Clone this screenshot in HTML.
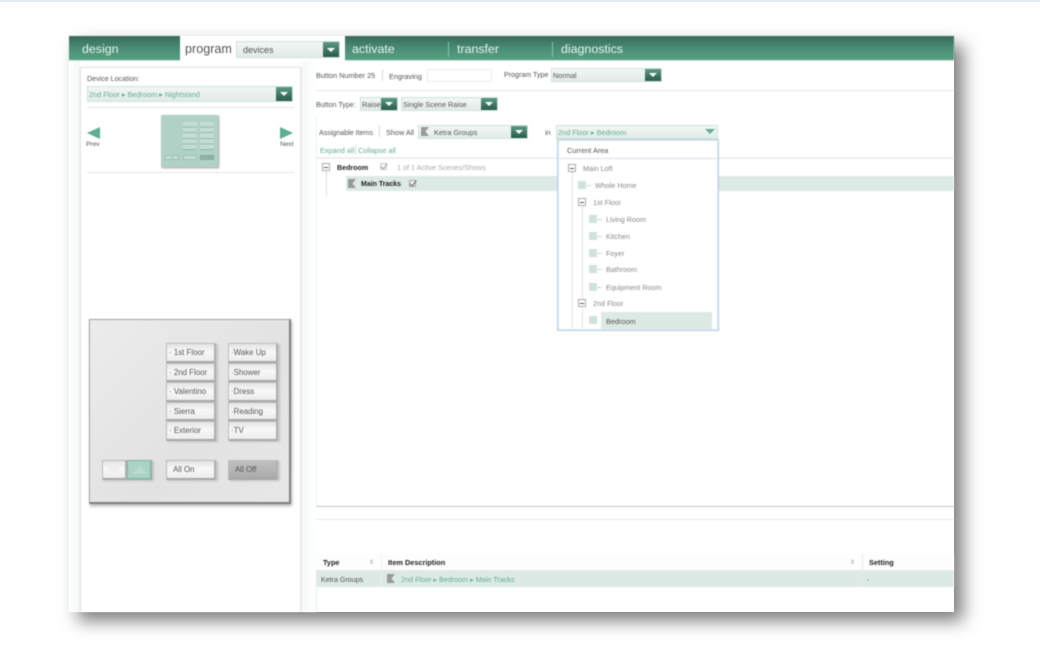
<!DOCTYPE html>
<html><head><meta charset="utf-8">
<style>
html,body{margin:0;padding:0;background:#fff;}
body{width:1040px;height:658px;position:relative;overflow:hidden;font-family:"Liberation Sans",sans-serif;}
#top{position:absolute;left:0;top:0;width:1040px;height:2px;background:#e4e8f2;}
#win{position:absolute;left:69px;top:36px;width:885px;height:576px;background:#fff;box-shadow:9px 9px 16px rgba(0,0,0,.5);}
#c{position:absolute;left:0;top:0;width:1040px;height:658px;overflow:hidden;filter:blur(.4px);}
#c div,#c span.t{position:absolute;}
.t{position:absolute;font-size:7.3px;color:#555;white-space:nowrap;line-height:10px;margin-top:2px;}
.g{color:#5fae94;}
.b{font-weight:bold;color:#222;}
.l{color:#8a8a8a;font-size:7.2px;}
.nav{position:absolute;font-size:12.4px;color:#e6f2ed;line-height:16px;white-space:nowrap;}
.sel{background:linear-gradient(#f2f6f4,#e2ebe7);border:1px solid #cfe3db;box-sizing:border-box;}
.ar{right:0;top:0;bottom:0;width:16px;background:linear-gradient(#5b9b84,#2a5a4a);}
.ar:after{content:"";position:absolute;left:3.5px;top:50%;margin-top:-2px;border-left:4.5px solid transparent;border-right:4.5px solid transparent;border-top:4.5px solid #fff;}
.hl{height:1px;background:#e2e4e3;}
.mb{width:8px;height:8px;border:1px solid #aaa;background:#fff;box-sizing:border-box;}
.mb:after{content:"";position:absolute;left:1px;top:2.5px;width:4px;height:1px;background:#555;}
.sq{width:8px;height:8px;background:#cfe3db;}
.dot{width:4px;border-top:1px dotted #bbb;height:0;}
.vd{width:0;border-left:1px dotted #c8c8c8;}
.kb{width:50px;height:19.5px;box-sizing:border-box;border:1px solid #bdbdbd;border-bottom:2px solid #a8a8a8;border-right:2px solid #b0b0b0;background:linear-gradient(#e4e4e4,#f8f8f8 45%,#ececec);box-shadow:2px 1px 2px rgba(0,0,0,.14);font-size:7.9px;color:#555;line-height:18px;padding-left:2px;white-space:nowrap;}
.ic{width:8px;height:9px;background:#999;clip-path:polygon(0 0,100% 0,55% 50%,100% 100%,0 100%);}
.ck{width:7px;height:7px;border:1px solid #aaa;box-sizing:border-box;background:#eee;}
.ck:after{content:"";position:absolute;left:1px;top:-2px;width:3px;height:6px;border-right:1.3px solid #666;border-bottom:1.3px solid #666;transform:rotate(35deg);}
.col{top:122px;width:14px;height:28px;background:repeating-linear-gradient(#c4ded4 0,#c4ded4 4.6px,#95b9ac 4.6px,#95b9ac 5.6px);box-sizing:border-box;}
.bt{top:155px;width:14px;height:5px;background:#c4ded4;border:1px solid #9dbfb3;box-sizing:border-box;}
</style></head>
<body>
<div id="top"></div>
<div id="win"></div>
<div id="c">
<!-- nav -->
<div style="left:69px;top:36px;width:885px;height:24px;background:linear-gradient(#386a59,#4a8f76 55%,#55a184);"></div>
<div style="left:69px;top:60px;width:885px;height:1px;background:#cfe3db;"></div>
<div style="left:180px;top:36px;width:165px;height:25px;background:#fff;"></div>
<div style="left:69px;top:61px;width:11px;height:551px;background:linear-gradient(90deg,#fff,#f4f8f6);"></div>
<div style="left:301px;top:61px;width:15px;height:551px;background:linear-gradient(90deg,#f6f9f8,#fff);"></div>
<span class="nav" style="left:82px;top:41px;">design</span>
<span class="nav" style="left:185px;top:41px;color:#555;font-size:12.6px;">program</span>
<span class="nav" style="left:352px;top:41px;">activate</span>
<span class="nav" style="left:457px;top:41px;">transfer</span>
<span class="nav" style="left:561px;top:41px;">diagnostics</span>
<div style="left:448px;top:42px;width:1px;height:15px;background:#8fc0ae;"></div>
<div style="left:552px;top:42px;width:1px;height:15px;background:#8fc0ae;"></div>
<div class="sel" style="left:236px;top:41px;width:104px;height:17px;"><div class="ar"></div></div>
<span class="t" style="left:243px;top:43px;font-size:9px;">devices</span>

<!-- left panel -->
<div style="left:80px;top:67px;width:221px;height:545px;box-sizing:border-box;background:#fff;border:1px solid #e3e5e4;border-bottom:0;box-shadow:0 0 2px rgba(0,0,0,.1);"></div>
<span class="t" style="left:87px;top:72px;font-size:7.1px;">Device Location:</span>
<div class="sel" style="left:87px;top:86px;width:206px;height:16px;"><div class="ar"></div></div>
<span class="t g" style="left:89px;top:88px;">2nd Floor ▸ Bedroom ▸ Nightstand</span>
<div class="hl" style="left:87px;top:107px;width:207px;"></div>
<div style="left:87px;top:127px;width:0;height:0;border-top:6px solid transparent;border-bottom:6px solid transparent;border-right:13px solid #5fae8f;"></div>
<div style="left:280px;top:127px;width:0;height:0;border-top:6px solid transparent;border-bottom:6px solid transparent;border-left:13px solid #5fae8f;"></div>
<span class="t" style="left:86px;top:138px;font-size:6.6px;">Prev</span>
<span class="t" style="left:280px;top:138px;font-size:6.6px;">Next</span>
<div style="left:161px;top:115px;width:57px;height:52px;background:#b0d2c6;box-shadow:1px 1px 2px rgba(0,0,0,.4);"></div>
<div class="col" style="left:183px;"></div>
<div class="col" style="left:200px;"></div>
<div class="bt" style="left:165px;"></div>
<div style="left:172px;top:155px;width:1px;height:5px;background:#9dbfb3;"></div>
<div class="bt" style="left:183px;"></div>
<div class="bt" style="left:200px;background:#8fb3a6;border-color:#8aa99d;"></div>
<div class="hl" style="left:87px;top:172px;width:207px;"></div>

<!-- keypad -->
<div style="left:89px;top:319px;width:202px;height:185px;box-sizing:border-box;border:1px solid #a5a5a5;border-right:2px solid #808080;border-bottom:2px solid #808080;background:linear-gradient(135deg,#ececec,#e2e2e2 60%,#e8e8e8);box-shadow:1px 2px 3px rgba(0,0,0,.3);"></div>
<div class="kb" style="left:166px;top:343px;">· 1st Floor</div>
<div class="kb" style="left:166px;top:362.5px;">· 2nd Floor</div>
<div class="kb" style="left:166px;top:382px;">· Valentino</div>
<div class="kb" style="left:166px;top:401.5px;">· Sierra</div>
<div class="kb" style="left:166px;top:421px;">· Exterior</div>
<div class="kb" style="left:228px;top:343px;">·Wake Up</div>
<div class="kb" style="left:228px;top:362.5px;">·Shower</div>
<div class="kb" style="left:228px;top:382px;">·Dress</div>
<div class="kb" style="left:228px;top:401.5px;">·Reading</div>
<div class="kb" style="left:228px;top:421px;">·TV</div>
<div class="kb" style="left:102px;top:460px;width:25px;height:20px;"></div>
<div style="left:106px;top:466px;width:0;height:0;border-left:8px solid transparent;border-right:8px solid transparent;border-top:8px solid #eee;"></div>
<div class="kb" style="left:127px;top:460px;width:25px;height:20px;background:#a9d3c4;border-color:#8db5a7;"></div>
<div style="left:132px;top:466px;width:0;height:0;border-left:8px solid transparent;border-right:8px solid transparent;border-bottom:8px solid #b9dccf;"></div>
<div class="kb" style="left:166px;top:460px;height:20px;padding-left:6px;">All On</div>
<div class="kb" style="left:228px;top:460px;height:20px;padding-left:6px;background:linear-gradient(#c0c0c0,#ababab);">All Off</div>

<!-- right -->
<div style="left:316px;top:115px;width:1px;height:391px;background:#eef0ef;"></div>
<div style="left:316px;top:570px;width:1px;height:42px;background:#e8ebea;"></div>
<span class="t" style="left:316px;top:69px;">Button Number 25</span>
<div style="left:382px;top:69px;width:1px;height:12px;background:#cfe3db;"></div>
<span class="t" style="left:389px;top:70px;">Engraving</span>
<div style="left:427px;top:69px;width:65px;height:13px;border:1px solid #e8eeeb;box-sizing:border-box;"></div>
<span class="t" style="left:504px;top:68px;font-size:7.1px;">Program Type</span>
<div class="sel" style="left:551px;top:68px;width:111px;height:14px;"><div class="ar"></div></div>
<span class="t" style="left:553px;top:69px;">Normal</span>
<div class="hl" style="left:316px;top:90px;width:638px;"></div>
<span class="t" style="left:316px;top:98px;font-size:7.1px;">Button Type:</span>
<div class="sel" style="left:360px;top:97px;width:38px;height:14px;"><div class="ar"></div></div>
<span class="t" style="left:362px;top:98px;">Raise</span>
<div class="sel" style="left:401px;top:97px;width:97px;height:14px;"><div class="ar"></div></div>
<span class="t" style="left:403px;top:98px;">Single Scene Raise</span>

<span class="t" style="left:319px;top:126px;font-size:7.1px;">Assignable Items</span>
<div style="left:379px;top:125px;width:1px;height:13px;background:#cfe3db;"></div>
<span class="t" style="left:386px;top:126px;">Show All</span>
<div class="sel" style="left:418px;top:125px;width:110px;height:14px;"><div class="ar"></div></div>
<div class="ic" style="left:421px;top:127px;"></div>
<span class="t" style="left:434px;top:126px;">Ketra Groups</span>
<span class="t" style="left:545px;top:126px;">in</span>
<div class="sel" style="left:556px;top:125px;width:162px;height:14px;"></div>
<span class="t g" style="left:558px;top:126px;">2nd Floor ▸ Bedroom</span>
<div style="left:705px;top:129px;width:0;height:0;border-left:5px solid transparent;border-right:5px solid transparent;border-top:5px solid #5fae94;"></div>
<span class="t g" style="left:320px;top:144px;">Expand all</span>
<div style="left:355px;top:145px;width:1px;height:10px;background:#cfe3db;"></div>
<span class="t g" style="left:358px;top:144px;">Collapse all</span>
<div class="hl" style="left:316px;top:157px;width:638px;height:2px;background:#eceeed;"></div>

<div class="mb" style="left:322px;top:163px;"></div>
<div class="vd" style="left:326px;top:172px;height:24px;"></div>
<span class="t b" style="left:337px;top:161px;font-size:7.1px;">Bedroom</span>
<div class="ck" style="left:380px;top:163px;opacity:.6;"></div>
<span class="t l" style="left:397px;top:161px;color:#aaa;">1 of 1 Active Scenes/Shows</span>
<div style="left:346px;top:176px;width:608px;height:15px;background:#dce9e5;"></div>
<div class="ic" style="left:348px;top:179px;"></div>
<span class="t b" style="left:361px;top:178px;font-size:7px;">Main Tracks</span>
<div class="ck" style="left:409px;top:180px;"></div>

<!-- dropdown -->
<div style="left:557px;top:139px;width:162px;height:192px;box-sizing:border-box;background:#fff;border:1px solid #b4d0e6;box-shadow:inset 0 0 0 1px #dfe9f2;"></div>
<div style="left:559px;top:158px;width:157px;height:1px;background:#d5dfe8;"></div>
<span class="t" style="left:567px;top:144px;">Current Area</span>
<div class="vd" style="left:572px;top:172px;height:156px;"></div>
<div class="vd" style="left:582px;top:207px;height:120px;"></div>
<div class="mb" style="left:568px;top:164px;"></div><span class="t l" style="left:583px;top:162px;">Main Loft</span>
<div class="sq" style="left:578px;top:181px;"></div><div class="dot" style="left:587px;top:185px;"></div><span class="t l" style="left:595px;top:179px;">Whole Home</span>
<div class="mb" style="left:578px;top:198px;"></div><span class="t l" style="left:593px;top:196px;">1st Floor</span>
<div class="sq" style="left:589px;top:215px;"></div><div class="dot" style="left:598px;top:219px;"></div><span class="t l" style="left:606px;top:213px;">Living Room</span>
<div class="sq" style="left:589px;top:232px;"></div><div class="dot" style="left:598px;top:236px;"></div><span class="t l" style="left:606px;top:230px;">Kitchen</span>
<div class="sq" style="left:589px;top:249px;"></div><div class="dot" style="left:598px;top:253px;"></div><span class="t l" style="left:606px;top:247px;">Foyer</span>
<div class="sq" style="left:589px;top:265px;"></div><div class="dot" style="left:598px;top:269px;"></div><span class="t l" style="left:606px;top:263px;">Bathroom</span>
<div class="sq" style="left:589px;top:283px;"></div><div class="dot" style="left:598px;top:287px;"></div><span class="t l" style="left:606px;top:281px;">Equipment Room</span>
<div class="mb" style="left:578px;top:299px;"></div><span class="t l" style="left:593px;top:297px;">2nd Floor</span>
<div style="left:601px;top:312px;width:111px;height:17px;background:#dce9e5;"></div>
<div class="sq" style="left:589px;top:316px;"></div>
<span class="t" style="left:606px;top:315px;">Bedroom</span>

<!-- bottom -->
<div style="left:316px;top:506px;width:638px;height:1px;background:#c4c4c4;"></div>
<div style="left:316px;top:519px;width:638px;height:1px;background:#e8e8e8;"></div>
<div style="left:316px;top:554px;width:638px;height:16px;background:#fdfdfd;border-bottom:1px solid #e4e8e6;"></div>
<div style="left:316px;top:571px;width:638px;height:16px;background:#dce9e5;"></div>
<div style="left:381px;top:554px;width:1px;height:33px;background:#eef1f0;"></div>
<div style="left:862px;top:554px;width:1px;height:33px;background:#e6e9e8;"></div>
<span class="t b" style="left:323px;top:556px;">Type</span>
<span class="t" style="left:369px;top:556px;font-size:6px;color:#999;">⇕</span>
<span class="t b" style="left:388px;top:556px;">Item Description</span>
<span class="t" style="left:850px;top:556px;font-size:6px;color:#999;">⇕</span>
<span class="t b" style="left:869px;top:556px;">Setting</span>
<span class="t" style="left:321px;top:573px;font-size:7.1px;">Ketra Groups</span>
<div class="ic" style="left:387px;top:574px;"></div>
<span class="t g" style="left:401px;top:573px;font-size:7.2px;">2nd Floor ▸ Bedroom ▸ Main Tracks</span>
<span class="t" style="left:867px;top:573px;">-</span>
</div>
</body></html>
